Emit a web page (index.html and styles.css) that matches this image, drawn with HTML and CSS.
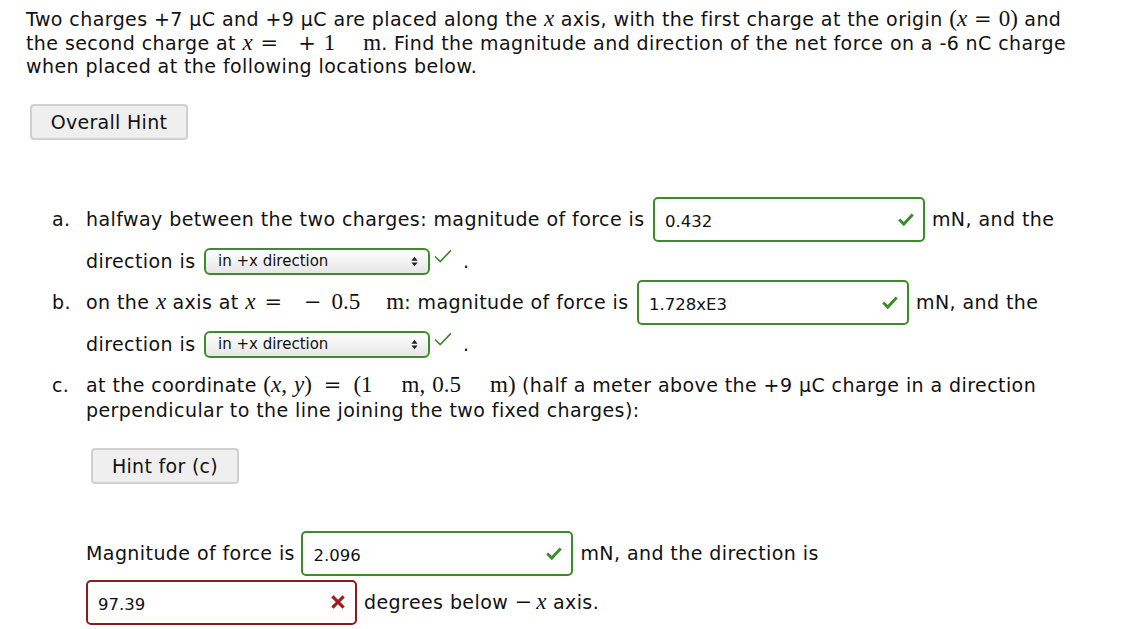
FILE: index.html
```html
<!DOCTYPE html>
<html>
<head>
<meta charset="utf-8">
<link rel="stylesheet" href="styles.css">
</head>
<body>
<div class="page">
  <p class="intro">Two charges +7 μC and +9 μC are placed along the <span class="m"><i>x</i></span> axis, with the first charge at the origin <span class="m">(<i>x</i><span class="op">=</span>0)</span> and<br>the second charge at <span class="m"><i>x</i><span class="op op-i">=</span><span class="op0">+</span><span class="g8"></span>1<span class="g28"></span>m</span>. Find the magnitude and direction of the net force on a -6 nC charge<br>when placed at the following locations below.</p>
  <div class="btnrow"><button class="hint">Overall Hint</button></div>

  <div class="parts">
    <div class="part part-a">
      <div class="marker">a.</div>
      <div class="body">
        <div class="row row-in">halfway between the two charges: magnitude of force is <span class="ans ok"><span class="val">0.432</span><svg class="mark" viewBox="0 0 16 16"><path d="M2 8.5 L6 12.5 L14 4" fill="none" stroke="#3d8b2b" stroke-width="2.6"/></svg></span>mN, and the</div>
        <div class="row row-sel">direction is <span class="sel"><span class="seltxt">in +x direction</span><svg class="arrows" viewBox="0 0 8 12"><path d="M4 0.5 L7.5 5 L0.5 5 Z M4 11.5 L7.5 7 L0.5 7 Z" fill="#222"/></svg></span><svg class="tick" viewBox="0 0 20 16"><path d="M1.5 8 L7 13.5 L18.5 1.5" fill="none" stroke="#3d8b2b" stroke-width="1.8"/></svg><span class="dot">.</span></div>
      </div>
    </div>
    <div class="part part-b">
      <div class="marker">b.</div>
      <div class="body">
        <div class="row row-in">on the <span class="m"><i>x</i></span> axis at <span class="m"><i>x</i><span class="op op-b">=</span><span class="op0">−</span><span class="g10"></span>0.5<span class="g26"></span>m</span>: magnitude of force is <span class="ans ok"><span class="val">1.728xE3</span><svg class="mark" viewBox="0 0 16 16"><path d="M2 8.5 L6 12.5 L14 4" fill="none" stroke="#3d8b2b" stroke-width="2.6"/></svg></span>mN, and the</div>
        <div class="row row-sel">direction is <span class="sel"><span class="seltxt">in +x direction</span><svg class="arrows" viewBox="0 0 8 12"><path d="M4 0.5 L7.5 5 L0.5 5 Z M4 11.5 L7.5 7 L0.5 7 Z" fill="#222"/></svg></span><svg class="tick" viewBox="0 0 20 16"><path d="M1.5 8 L7 13.5 L18.5 1.5" fill="none" stroke="#3d8b2b" stroke-width="1.8"/></svg><span class="dot">.</span></div>
      </div>
    </div>
    <div class="part part-c">
      <div class="marker">c.</div>
      <div class="body">
        <p class="ctext">at the coordinate <span class="m">(<i>x</i>,<span class="g7"></span><i>y</i>)<span class="op op-c">=</span>(1<span class="g29"></span>m,<span class="g7"></span>0.5<span class="g29"></span>m)</span> (half a meter above the +9 μC charge in a direction<br>perpendicular to the line joining the two fixed charges):</p>
        <div class="btnrow2"><button class="hint">Hint for (c)</button></div>
      </div>
    </div>
  </div>

  <div class="final">
    <div class="row row-in">Magnitude of force is <span class="ans ok fin"><span class="val">2.096</span><svg class="mark" viewBox="0 0 16 16"><path d="M2 8.5 L6 12.5 L14 4" fill="none" stroke="#3d8b2b" stroke-width="2.6"/></svg></span>mN, and the direction is</div>
    <div class="row row-in2"><span class="ans bad"><span class="val">97.39</span><svg class="mark" viewBox="0 0 16 16"><path d="M3 3 L13 13 M13 3 L3 13" fill="none" stroke="#a11d1d" stroke-width="2.8"/></svg></span>degrees below <span class="m"><span class="op0">−</span><span class="g4"></span><i>x</i></span> axis.</div>
  </div>
</div>
</body>
</html>
```

FILE: styles.css
```css
html, body { margin: 0; padding: 0; background: #fff; }
body {
  font-family: "DejaVu Sans", Verdana, sans-serif;
  font-size: 19px;
  letter-spacing: 0.42px;
  color: #111;
}
.page { padding: 0 0 0 26px; }
.intro {
  margin: 0;
  padding-top: 7px;
  line-height: 23px;
  white-space: nowrap;
}
.m { font-family: "Liberation Serif", serif; font-size: 23px; letter-spacing: 0; }
.m i { font-style: italic; }
.op, .op0 { font-family: "DejaVu Serif", serif; font-size: 21px; }
.op { margin: 0 7px; }
.op-i { margin: 0 20px 0 8px; }
.op-b { margin: 0 22px 0 9px; }
.op-c { margin: 0 12px; }
.g4, .g7, .g8, .g10, .g26, .g28, .g29 { display: inline-block; }
.g4 { width: 4px; }
.g7 { width: 7px; }
.g8 { width: 8px; }
.g10 { width: 10px; }
.g26 { width: 26px; }
.g28 { width: 28px; }
.g29 { width: 29px; }
.btnrow { margin-top: 26px; height: 36px; margin-left: 4px; }
.hint {
  font-family: inherit;
  font-size: 19px;
  letter-spacing: 0.3px;
  color: #111;
  background: #efefef;
  border: 2px solid #d0d0d0;
  border-radius: 4px;
  padding: 0;
  height: 36px;
}
.btnrow .hint { width: 158px; }
.parts { margin-top: 56px; }
.part { display: flex; margin-left: 26px; }
.marker { width: 34px; flex: none; height: 46px; display: flex; align-items: center; }
.body { flex: 1; }
.row { display: flex; align-items: center; white-space: pre; }
.row-in { height: 46px; }
.row-sel { height: 36px; margin-top: 1px; }
.ans {
  display: inline-flex;
  align-items: center;
  justify-content: space-between;
  box-sizing: border-box;
  width: 272px;
  height: 45px;
  border: 2px solid #3d8b2b;
  border-radius: 5px;
  padding: 0 8px 0 10px;
  margin: 0 7px 0 2px;
  background: #fff;
}
.ans.fin { margin-left: 0; }
.ans.bad { border-color: #8e1b1b; margin-left: 0; width: 271px; }
.val { font-family: "DejaVu Sans", sans-serif; font-size: 16.5px; letter-spacing: 0; color: #111; padding-top: 4px; }
.mark { width: 18px; height: 18px; }
.sel {
  display: inline-flex;
  align-items: center;
  justify-content: space-between;
  box-sizing: border-box;
  width: 226px;
  height: 27px;
  border: 2px solid #3d8b2b;
  border-radius: 6px;
  background: linear-gradient(#ffffff, #e6e6e6);
  padding: 0 10px 0 12px;
  margin-left: 2px;
}
.seltxt { font-family: "DejaVu Sans", sans-serif; font-size: 15px; letter-spacing: 0; color: #111; }
.arrows { width: 7px; height: 11px; }
.tick { width: 20px; height: 15px; margin: -10px 0 0 3px; }
.dot { margin-left: 10px; }
.part-c { margin-top: 10px; }
.part-c .marker { height: 25px; }
.ctext { margin: 0; line-height: 25px; white-space: nowrap; }
.btnrow2 { margin-top: 25px; margin-left: 5px; }
.btnrow2 .hint { width: 148px; }
.final { margin-left: 60px; margin-top: 46px; }
.row-in2 { height: 46px; margin-top: 3px; }
```
